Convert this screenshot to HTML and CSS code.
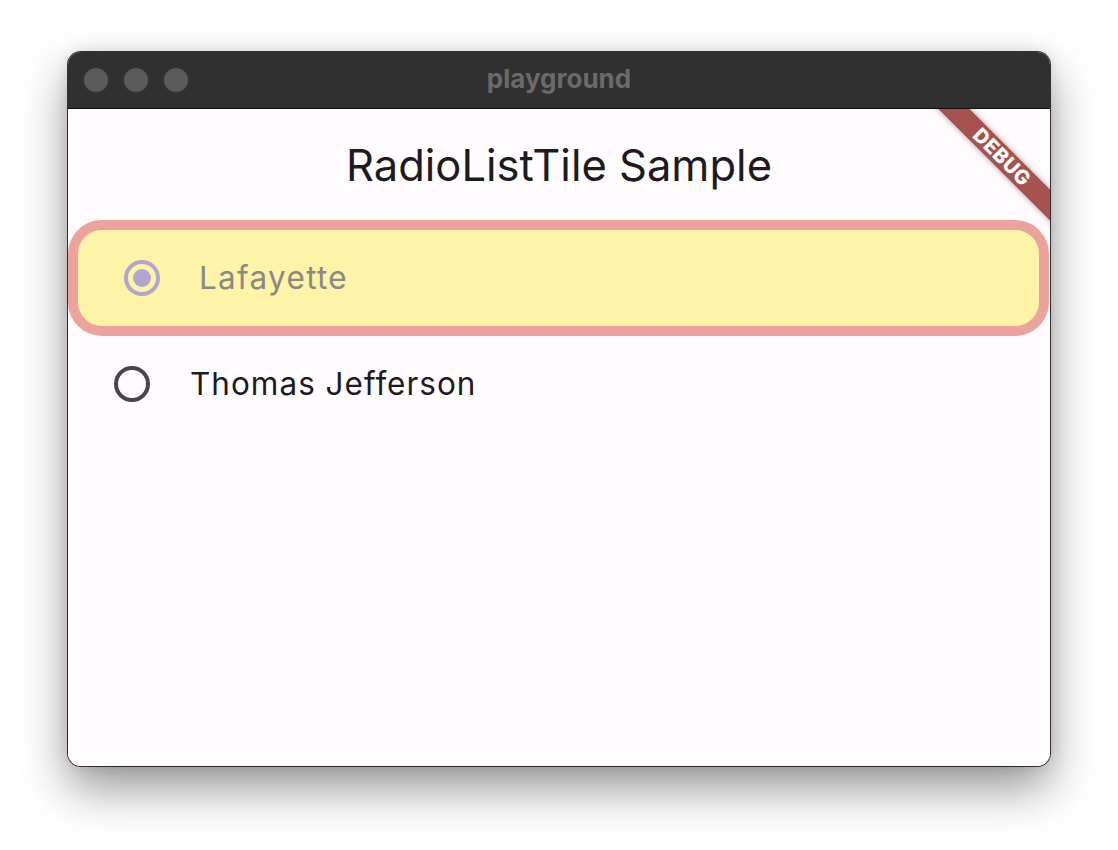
FILE: index.html
```html
<!DOCTYPE html>
<html lang="en">
<head>
<meta charset="utf-8">
<title>playground</title>
<link rel="stylesheet" href="styles.css">
</head>
<body>
  <div class="window">
    <div class="titlebar">
      <div class="lights">
        <span class="light"></span>
        <span class="light"></span>
        <span class="light"></span>
      </div>
      <div class="wintitle">playground</div>
    </div>
    <div class="content">
      <header class="appbar">
        <h1 class="apptitle">RadioListTile Sample</h1>
      </header>
      <div class="list">
        <div class="tile tile-selected">
          <span class="radio radio-on"><span class="dot"></span></span>
          <span class="label label-on">Lafayette</span>
        </div>
        <div class="tile">
          <span class="radio"></span>
          <span class="label">Thomas Jefferson</span>
        </div>
      </div>
      <div class="banner">
        <div class="ribbon">DEBUG</div>
      </div>
    </div>
  </div>
</body>
</html>
```
FILE: styles.css
```css
* { box-sizing: border-box; }

html, body {
  margin: 0;
  padding: 0;
  background: #ffffff;
}

body {
  width: 1118px;
  height: 850px;
  padding: 52px 0 0 68px;
  font-family: "Inter", "Roboto", sans-serif;
}

.window {
  width: 982px;
  height: 714px;
  border-radius: 13px;
  overflow: hidden;
  display: flex;
  flex-direction: column;
  background: #fffbfe;
  box-shadow: 0 0 0 1px rgba(20, 20, 20, 0.85), 0 22px 48px rgba(0, 0, 0, 0.42), 0 0 14px rgba(0, 0, 0, 0.12);
}

.titlebar {
  position: relative;
  height: 57px;
  flex: none;
  background: #303030;
  border-bottom: 1px solid #0f0f0f;
  display: flex;
  align-items: center;
  padding-left: 16px;
}

.lights {
  display: flex;
  gap: 16px;
}

.light {
  width: 24px;
  height: 24px;
  border-radius: 50%;
  background: #5b5b5b;
}

.wintitle {
  position: absolute;
  left: 0;
  right: 0;
  top: 0;
  bottom: 0;
  display: flex;
  align-items: center;
  justify-content: center;
  font-family: "Inter", "Liberation Sans", sans-serif;
  font-weight: 700;
  font-size: 26px;
  color: #6a6a6a;
  padding-bottom: 3px;
}

.content {
  position: relative;
  flex: 1;
  background: #fffbfe;
}

.appbar {
  height: 111px;
  display: flex;
  align-items: center;
  justify-content: center;
}

.apptitle {
  margin: 0;
  font-weight: 400;
  font-size: 43.5px;
  color: #1d1b20;
  padding-bottom: 0;
}

.list {
  display: flex;
  flex-direction: column;
  padding-right: 1px;
}

.tile {
  height: 96px;
  display: flex;
  align-items: center;
  padding-left: 46px;
  gap: 40px;
}

.tile-selected {
  height: 116px;
  border: 10px solid #eca39d;
  border-radius: 34px;
  background: #fdf4a7;
}

.radio {
  width: 36px;
  height: 36px;
  flex: none;
  border-radius: 50%;
  border: 4px solid #49454f;
  display: flex;
  align-items: center;
  justify-content: center;
}

.radio-on {
  border-color: #b2a5d1;
}

.dot {
  width: 18px;
  height: 18px;
  border-radius: 50%;
  background: #b2a5d1;
}

.label {
  font-size: 31.5px;
  letter-spacing: 1px;
  color: #1d1b20;
  padding-bottom: 2px;
}

.label-on {
  color: #8a8986;
  margin-left: -1px;
  letter-spacing: 1.3px;
}

.banner {
  position: absolute;
  top: 0;
  right: 0;
  width: 130px;
  height: 130px;
  overflow: hidden;
}

.ribbon {
  position: absolute;
  left: 82px;
  top: 48px;
  width: 200px;
  height: 22px;
  margin-left: -100px;
  margin-top: -11px;
  transform: rotate(45deg);
  background: #a65350;
  box-shadow: 0 0 6px rgba(0, 0, 0, 0.35);
  color: #ffffff;
  font-family: "Inter", "Liberation Sans", sans-serif;
  font-weight: 800;
  font-size: 20px;
  line-height: 22px;
  text-align: center;
  letter-spacing: 0.5px;
}
```
